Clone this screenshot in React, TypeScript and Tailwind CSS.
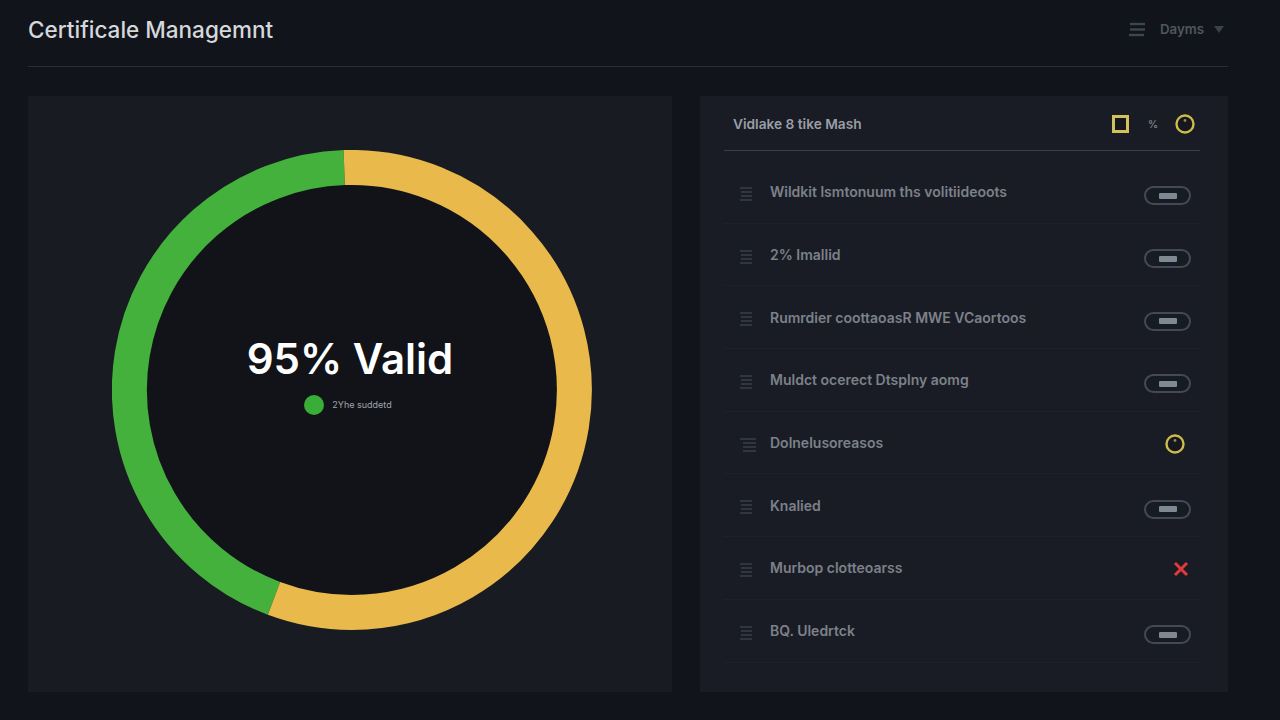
const font = { fontFamily: "Inter, 'Liberation Sans', sans-serif" }

function LinesIcon({ big = false }: { big?: boolean }) {
  return (
    <svg width={big ? 16 : 13} height="16" viewBox={big ? "0 0 16 16" : "0 0 13 16"} className="shrink-0">
      <g stroke="#454b55" strokeWidth="1.1">
        <line x1="0" y1="2" x2={big ? 16 : 12} y2="2" />
        <line x1={big ? 3 : 1} y1="6" x2={big ? 16 : 12} y2="6" />
        <line x1={big ? 3 : 1} y1="10" x2={big ? 16 : 12} y2="10" />
        <line x1={big ? 3 : 0} y1="14" x2={big ? 16 : 12} y2="14" />
      </g>
    </svg>
  )
}

function Pill() {
  return (
    <div className="flex h-[19px] w-[47px] items-center justify-center rounded-full border-2 border-[#434a54] bg-[#171b22]">
      <div className="h-[6px] w-[18px] rounded-[1px] bg-[#7e8993]" />
    </div>
  )
}

function YellowDial({ size = 20 }: { size?: number }) {
  return (
    <svg width={size} height={size} viewBox="0 0 20 20">
      <circle cx="10" cy="10" r="8.5" fill="#15171c" stroke="#cdbb4e" strokeWidth="2.4" />
      <circle cx="10" cy="6.5" r="1.4" fill="#8e8a5a" />
    </svg>
  )
}

function RedX() {
  return (
    <svg width="16" height="16" viewBox="0 0 16 16">
      <path d="M2 2 L14 14 M14 2 L2 14" stroke="#e0393e" strokeWidth="3" />
    </svg>
  )
}

const rows = [
  { label: "Wildkit lsmtonuum ths volitiideoots", end: "pill" },
  { label: "2% Imallid", end: "pill" },
  { label: "Rumrdier coottaoasR MWE VCaortoos", end: "pill" },
  { label: "Muldct ocerect Dtsplny aomg", end: "pill" },
  { label: "Dolnelusoreasos", end: "dial", big: true },
  { label: "Knalied", end: "pill" },
  { label: "Murbop clotteoarss", end: "x" },
  { label: "BQ. Uledrtck", end: "pill" },
]

export default function App() {
  return (
    <div className="h-[720px] w-[1280px] overflow-hidden bg-[#11141a] pl-[28px] pr-[52px]" style={font}>
      <header className="flex h-[67px] items-center justify-between border-b border-[#2a2e36] pb-[7px]">
        <h1 className="text-[22.5px] font-medium text-[#d5d8db]">Certificale Managemnt</h1>
        <div className="flex items-center">
          <svg width="16" height="15" viewBox="0 0 16 15">
            <g stroke="#3c4650" strokeWidth="2.4">
              <line x1="1" y1="2" x2="16" y2="2" />
              <line x1="1" y1="7.5" x2="16" y2="7.5" />
              <line x1="0" y1="13" x2="15" y2="13" />
            </g>
          </svg>
          <span className="ml-[15px] text-[13.3px] font-semibold text-[#4f565f]">Dayms</span>
          <svg width="10" height="7" viewBox="0 0 10 7" className="ml-[10px] mr-[4px]">
            <path d="M0 0 H10 L5 7 Z" fill="#3a414a" />
          </svg>
        </div>
      </header>

      <main className="mt-[29px] flex h-[596px] gap-[28px]">
        <section className="relative flex w-[644px] items-center justify-center bg-[#181b22]">
          <svg width="480" height="480" viewBox="0 0 480 480" className="ml-[4px] mt-[-8px]">
            <circle cx="240" cy="240" r="205" fill="#111318" />
            <path d="M232.2 17.6 A222.5 222.5 0 0 0 162 448.4" fill="none" stroke="#43b13b" strokeWidth="35" />
            <path d="M232.2 17.6 A222.5 222.5 0 1 1 162 448.4" fill="none" stroke="#e9b94b" strokeWidth="35" />
          </svg>
          <div className="absolute left-0 right-0 top-[238px] flex flex-col items-center">
            <div className="text-[42px] font-semibold leading-[50px] text-white">95% Valid</div>
            <div className="mr-[4px] mt-[11px] flex items-center gap-[8px]">
              <div className="h-[20px] w-[20px] rounded-full bg-[#3aad38]" />
              <span className="text-[9px] text-[#a0a4a8]">2Yhe suddetd</span>
            </div>
          </div>
        </section>

        <section className="w-[528px] bg-[#191c25] pl-[24px] pr-[28px]">
          <div className="flex h-[55px] items-center justify-between border-b border-[#3a3e46] pl-[9px] pr-[5px] pt-[2px]">
            <span className="text-[13.7px] font-semibold text-[#9a9ea5]">Vidlake 8 tike Mash</span>
            <div className="flex items-center">
              <div className="h-[18px] w-[17px] border-[3px] border-[#d3c25a] bg-[#14171c]" />
              <span className="ml-[19px] mr-[17px] text-[10px] font-semibold text-[#80858c]">%</span>
              <YellowDial />
            </div>
          </div>
          <ul className="mt-[10px]">
            {rows.map((row) => (
              <li key={row.label} className="flex h-[62.7px] items-center border-b border-[#1e2129] pl-[16px] pr-[9px] pt-[8px]">
                <div className="mb-[4px] flex w-[30px] justify-start">
                  <LinesIcon big={row.big} />
                </div>
                <span className="flex-1 pb-[8px] text-[14px] font-semibold text-[#7c8189]">{row.label}</span>
                {row.end === "pill" && <Pill />}
                {row.end === "dial" && (
                  <div className="mb-[6px] mr-[6px]">
                    <YellowDial />
                  </div>
                )}
                {row.end === "x" && (
                  <div className="mb-[6px] mr-[2px]">
                    <RedX />
                  </div>
                )}
              </li>
            ))}
          </ul>
        </section>
      </main>
    </div>
  )
}
